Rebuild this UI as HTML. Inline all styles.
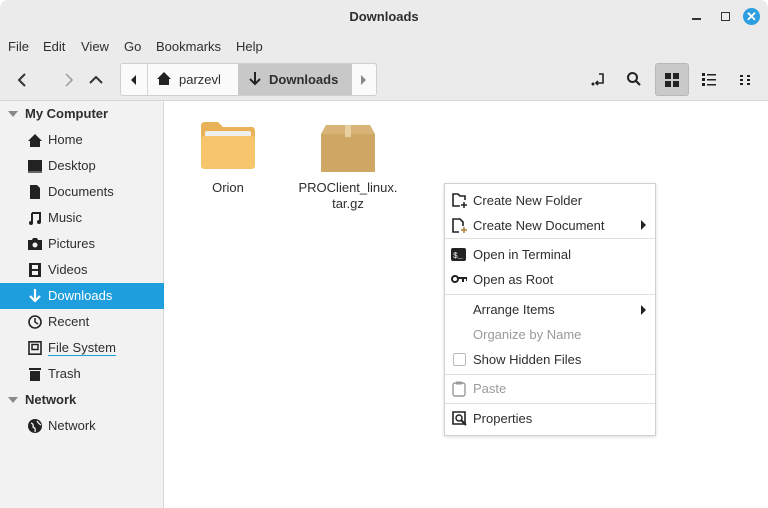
<!DOCTYPE html>
<html><head><style>
*{margin:0;padding:0;box-sizing:border-box}
body{width:768px;height:508px;background:#fff;font-family:"Liberation Sans",sans-serif;font-size:13px;color:#2e2e2e;position:relative;overflow:hidden}
.a{position:absolute}
#top{left:0;top:0;width:768px;height:101px;background:#ebebeb;border-radius:8px 8px 0 0;border-bottom:1px solid #d6d6d6}
.menu span{position:absolute;top:39px;font-size:13px}
#side{left:0;top:101px;width:164px;height:407px;background:#f2f2f2;border-right:1px solid #d8d8d8}
.si{position:absolute;left:0;width:164px;height:26px;line-height:26px;padding-left:48px}
.si svg{position:absolute;left:28px;top:6px}
.hd{font-weight:bold;padding-left:25px}
.tri{position:absolute;left:8px;top:10px;width:0;height:0;border-left:5px solid transparent;border-right:5px solid transparent;border-top:6px solid #888}
#cm{left:444px;top:183px;width:212px;height:253px;background:#fff;border:1px solid #d0d0d0;box-shadow:0 1px 3px rgba(0,0,0,.15)}
.mi{position:absolute;left:28px;font-size:13px;color:#2e2e2e}
.sep{position:absolute;left:0;width:210px;height:1px;background:#e0e0e0}
.arr{position:absolute;left:196px;width:0;height:0;border-top:5px solid transparent;border-bottom:5px solid transparent;border-left:5px solid #222}
</style></head><body>
<div class="a" id="top"></div>
<div class="a" style="left:0;top:9px;width:768px;text-align:center;font-weight:bold;font-size:13px">Downloads</div>
<div class="a" style="left:692px;top:18px;width:9px;height:1.5px;background:#333"></div>
<div class="a" style="left:721px;top:12px;width:9px;height:9px;border:1.5px solid #333"></div>
<div class="a" style="left:743px;top:8px;width:17px;height:17px;border-radius:50%;background:#2d9fe0;color:#fff;font-weight:bold;font-size:13px;line-height:17px;text-align:center">✕</div>
<div class="menu"><span style="left:8px">File</span><span style="left:43px">Edit</span><span style="left:81px">View</span><span style="left:124px">Go</span><span style="left:156px">Bookmarks</span><span style="left:236px">Help</span></div>
<svg class="a" style="left:12px;top:70px" width="100" height="20"><path d="M13 4 L7 10 L13 16" stroke="#333" stroke-width="2" fill="none"/><path d="M54 4 L60 10 L54 16" stroke="#999" stroke-width="1.5" fill="none"/><path d="M78 13 L84 7 L90 13" stroke="#333" stroke-width="2" fill="none"/></svg>
<div class="a" style="left:120px;top:63px;width:257px;height:33px;border:1px solid #cfcfcf;border-radius:3px;background:#fafafa"></div>
<div class="a" style="left:147px;top:64px;width:1px;height:31px;background:#d5d5d5"></div>
<div class="a" style="left:238px;top:64px;width:114px;height:31px;background:#c8c8c8"></div>
<div class="a" style="left:131px;top:75px;border-top:5px solid transparent;border-bottom:5px solid transparent;border-right:5px solid #222"></div>
<div class="a" style="left:361px;top:75px;border-top:5px solid transparent;border-bottom:5px solid transparent;border-left:5px solid #888"></div>
<svg class="a" style="left:157px;top:72px" width="14" height="13"><path d="M7 0 L14 7 H12 V13 H2 V7 H0Z" fill="#222"/></svg>
<div class="a" style="left:179px;top:72px">parzevl</div>
<svg class="a" style="left:249px;top:72px" width="12" height="14"><path d="M6 0 V12 M1 7 L6 12 L11 7" stroke="#222" stroke-width="2" fill="none"/></svg>
<div class="a" style="left:269px;top:72px;font-weight:bold">Downloads</div>
<svg class="a" style="left:590px;top:71px" width="16" height="16"><circle cx="3" cy="13" r="1.5" fill="#222"/><path d="M9 3 H13 V12 H6 M8 10 L6 12 L8 14" stroke="#222" stroke-width="1.6" fill="none"/></svg>
<svg class="a" style="left:626px;top:71px" width="16" height="16"><circle cx="6.5" cy="6.5" r="4.5" stroke="#222" stroke-width="2" fill="none"/><path d="M10 10 L14 14" stroke="#222" stroke-width="2.2"/></svg>
<div class="a" style="left:655px;top:63px;width:34px;height:33px;background:#c9c9c9;border:1px solid #b8b8b8;border-radius:3px"></div>
<svg class="a" style="left:665px;top:73px" width="14" height="14"><rect x="0" y="0" width="6" height="6" fill="#222"/><rect x="8" y="0" width="6" height="6" fill="#222"/><rect x="0" y="8" width="6" height="6" fill="#222"/><rect x="8" y="8" width="6" height="6" fill="#222"/></svg>
<svg class="a" style="left:702px;top:73px" width="14" height="14"><rect x="0" y="0" width="3" height="3" fill="#222"/><rect x="0" y="5" width="3" height="3" fill="#222"/><rect x="0" y="10" width="3" height="3" fill="#222"/><rect x="5" y="1" width="9" height="1.5" fill="#222"/><rect x="5" y="6" width="9" height="1.5" fill="#222"/><rect x="5" y="11" width="9" height="1.5" fill="#222"/></svg>
<svg class="a" style="left:740px;top:75px" width="12" height="10"><g fill="#222"><rect x="0" y="0" width="3" height="2"/><rect x="0" y="4" width="3" height="2"/><rect x="0" y="8" width="3" height="2"/><rect x="7" y="0" width="3" height="2"/><rect x="7" y="4" width="3" height="2"/><rect x="7" y="8" width="3" height="2"/></g></svg>

<div class="a" id="side">
<div class="si hd" style="top:0"><span class="tri"></span>My Computer</div>
<div class="si" style="top:26px"><svg width="14" height="14"><path d="M7 1 L14 8 H12 V14 H2 V8 H0Z" fill="#222"/></svg>Home</div>
<div class="si" style="top:52px"><svg width="14" height="14"><rect x="0" y="1" width="14" height="11" fill="#222"/><rect x="0" y="12" width="14" height="2" fill="#666"/></svg>Desktop</div>
<div class="si" style="top:78px"><svg width="14" height="14"><path d="M2 0 H9 L12 3 V14 H2Z" fill="#222"/></svg>Documents</div>
<div class="si" style="top:104px"><svg width="14" height="14"><path d="M4 2 H12 V11 M4 2 V12" stroke="#222" stroke-width="2" fill="none"/><circle cx="3" cy="12" r="2" fill="#222"/><circle cx="11" cy="11" r="2" fill="#222"/></svg>Music</div>
<div class="si" style="top:130px"><svg width="14" height="14"><path d="M0 3 H4 L5 1 H9 L10 3 H14 V13 H0Z" fill="#222"/><circle cx="7" cy="8" r="2.5" fill="#f2f2f2"/></svg>Pictures</div>
<div class="si" style="top:156px"><svg width="14" height="14"><rect x="1" y="0" width="12" height="14" fill="#222"/><rect x="4" y="2" width="6" height="4" fill="#f2f2f2"/><rect x="4" y="8" width="6" height="4" fill="#f2f2f2"/></svg>Videos</div>
<div class="si" style="top:182px;background:#1f9ede;color:#fff"><svg width="14" height="14"><path d="M7 0 V12 M2 7 L7 12 L12 7" stroke="#fff" stroke-width="2.2" fill="none"/></svg>Downloads</div>
<div class="si" style="top:208px"><svg width="14" height="14"><circle cx="7" cy="7" r="6" stroke="#222" stroke-width="1.6" fill="none"/><path d="M7 3 V7 L10 9" stroke="#222" stroke-width="1.5" fill="none"/></svg>Recent</div>
<div class="si" style="top:234px"><svg width="14" height="14"><rect x="1" y="0.8" width="12" height="12.4" stroke="#222" stroke-width="1.6" fill="none"/><rect x="4" y="3.5" width="6" height="5" stroke="#222" stroke-width="1.5" fill="none"/></svg><span style="border-bottom:1.5px solid #1f9ede">File System</span></div>
<div class="si" style="top:260px"><svg width="14" height="14"><rect x="1" y="1" width="12" height="2" fill="#222"/><rect x="2" y="4" width="10" height="10" fill="#222"/></svg>Trash</div>
<div class="si hd" style="top:286px"><span class="tri"></span>Network</div>
<div class="si" style="top:312px"><svg width="14" height="14"><circle cx="7" cy="7" r="7" fill="#222"/><path d="M3 4 Q6 5 5 8 Q8 9 7 13 M9 2 Q11 5 13 6" stroke="#f2f2f2" stroke-width="1.3" fill="none"/></svg>Network</div>
</div>

<svg class="a" style="left:200px;top:121px" width="56" height="50"><path d="M1 5 Q1 1 5 1 H18 L23 6 H52 Q55 6 55 10 V44 Q55 48 51 48 H5 Q1 48 1 44Z" fill="#e9b256"/><rect x="5" y="10" width="46" height="8" rx="2" fill="#eee"/><path d="M1 18 Q1 15 4 15 H52 Q55 15 55 18 V44 Q55 48 51 48 H5 Q1 48 1 44Z" fill="#f7c56c"/></svg>
<div class="a" style="left:180px;top:180px;width:96px;text-align:center">Orion</div>
<svg class="a" style="left:320px;top:124px" width="56" height="50"><path d="M6 1 H50 L55 10 V48 H1 V10Z" fill="#cfa765"/><path d="M6 1 H50 L55 10 H1Z" fill="#d9b478"/><rect x="25" y="1" width="6" height="12" fill="#e8cfa0"/></svg>
<div class="a" style="left:290px;top:180px;width:116px;text-align:center;line-height:16px">PROClient_linux.<br>tar.gz</div>

<div class="a" id="cm">
<svg class="a" style="left:7px;top:9px" width="15" height="15"><path d="M8 13 H1 V1 H6 L8 3 H13 V7" stroke="#222" stroke-width="1.6" fill="none"/><path d="M12 9 V15 M9 12 H15" stroke="#222" stroke-width="1.5"/></svg>
<div class="mi" style="top:9px">Create New Folder</div>
<svg class="a" style="left:7px;top:34px" width="15" height="15"><path d="M7 14 H1 V1 H8 L11 4 V8" stroke="#222" stroke-width="1.6" fill="none"/><path d="M12 9 V15 M9 12 H15" stroke="#b07a30" stroke-width="1.5"/></svg>
<div class="mi" style="top:34px">Create New Document</div><div class="arr" style="top:36px"></div>
<div class="sep" style="top:54px"></div>
<svg class="a" style="left:6px;top:64px" width="15" height="13"><rect width="15" height="13" rx="2" fill="#222"/><text x="2" y="10" font-size="8" fill="#fff" font-family="Liberation Mono">$_</text></svg>
<div class="mi" style="top:63px">Open in Terminal</div>
<svg class="a" style="left:6px;top:91px" width="16" height="8"><circle cx="4" cy="4" r="3" stroke="#222" stroke-width="2" fill="none"/><path d="M7 3 H16 V6 M12 3 V7" stroke="#222" stroke-width="2" fill="none"/></svg>
<div class="mi" style="top:88px">Open as Root</div>
<div class="sep" style="top:110px"></div>
<div class="mi" style="top:118px">Arrange Items</div><div class="arr" style="top:121px"></div>
<div class="mi" style="top:143px;color:#9a9a9a">Organize by Name</div>
<div class="a" style="left:8px;top:169px;width:13px;height:13px;border:1px solid #bbb;border-radius:2px"></div>
<div class="mi" style="top:168px">Show Hidden Files</div>
<div class="sep" style="top:190px"></div>
<svg class="a" style="left:7px;top:197px" width="14" height="16"><rect x="1" y="2" width="12" height="13" rx="2" stroke="#999" stroke-width="1.4" fill="none"/><rect x="4" y="0.5" width="6" height="3" fill="#999"/></svg>
<div class="mi" style="top:197px;color:#9a9a9a">Paste</div>
<div class="sep" style="top:219px"></div>
<svg class="a" style="left:7px;top:227px" width="15" height="15"><path d="M1 1 H13 V13 H1Z" stroke="#222" stroke-width="1.6" fill="none"/><circle cx="7" cy="7" r="3" stroke="#222" stroke-width="1.5" fill="none"/><path d="M9 9 L14 14" stroke="#222" stroke-width="2"/></svg>
<div class="mi" style="top:227px">Properties</div>
</div>
</body></html>
